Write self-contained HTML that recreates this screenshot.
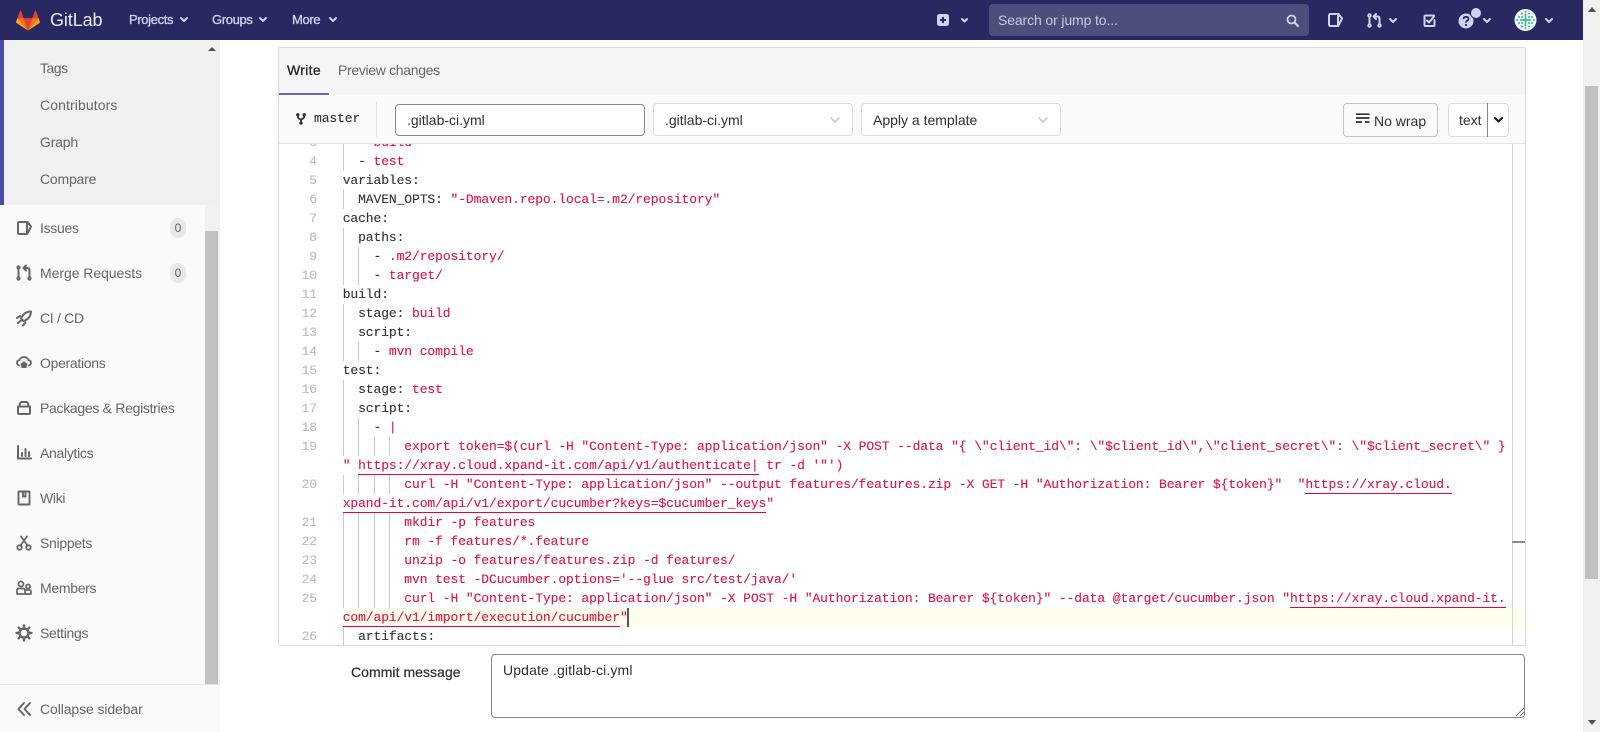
<!DOCTYPE html>
<html>
<head>
<meta charset="utf-8">
<style>
html,body{margin:0;padding:0;width:1600px;height:732px;overflow:hidden;background:#fff;font-family:"Liberation Sans",sans-serif;font-size:14px;color:#303030}
*{box-sizing:border-box}
.a{position:absolute}
svg{display:block;overflow:visible}
#nav{left:0;top:0;width:1583px;height:40px;background:#292961}
.nt{position:absolute;top:0;line-height:40px;color:#d1d1f0;font-size:13px;letter-spacing:-.35px;-webkit-text-stroke:.3px #d1d1f0;white-space:nowrap}
.chev{position:absolute;fill:none;stroke:#d1d1f0;stroke-width:2;stroke-linecap:round;stroke-linejoin:round}
.ni{position:absolute;fill:none;stroke:#d1d1f0;stroke-width:1.8;stroke-linejoin:round;stroke-linecap:round}
.s{position:absolute;left:40px;line-height:20px;height:20px;font-size:14px;color:#666;white-space:nowrap;letter-spacing:-.2px}
.m{position:absolute;left:40px;line-height:20px;height:20px;font-size:14px;color:#666;white-space:nowrap;letter-spacing:-.3px}
.si{position:absolute;left:16px;fill:none;stroke:#666;stroke-width:1.8;stroke-linejoin:round;stroke-linecap:round}
.bd{position:absolute;left:170px;width:16px;height:20px;border-radius:8px;background:#e8e8e8;color:#666;font-size:12px;line-height:20px;text-align:center}
.box{position:absolute;border:1px solid #dcdcdc;border-radius:4px;background:#fff;height:33px;line-height:32px;padding-left:11px;font-size:14px;color:#303030;white-space:nowrap;letter-spacing:0}
#ed{left:279px;top:144px;width:1246px;height:501px;overflow:hidden;background:#fff}
#rows{position:absolute;left:0;top:-11px;width:1246px}
.r{position:relative;height:19px;width:1246px;font-family:"Liberation Mono",monospace;font-size:13px;letter-spacing:-.1px;line-height:19px;white-space:pre;color:#333;-webkit-text-stroke:.12px}
.t{position:absolute;left:63.7px;top:0;height:19px}
.n{position:absolute;left:0;width:38px;top:0;text-align:right;color:#bdbdbd}
.g{position:absolute;top:0;width:1px;height:19px;background:#c8c8c8}
.g0{left:64px}.g2{left:79.4px}.g4{left:94.8px}.g6{left:110.2px}
b{font-weight:normal;color:#e0124a}
u{text-decoration:none;display:inline-block;height:19px;line-height:19px;box-sizing:border-box;border-bottom:1px solid #e8003f;vertical-align:top;color:#e0124a}
</style>
</head>
<body>
<!-- top nav -->
<div id="nav" class="a">
<svg class="a" style="left:16px;top:9px" width="24" height="22" viewBox="0 0 36 36" preserveAspectRatio="none"><path fill="#e24329" d="m17.996 35.308 6.624-20.387H11.372z"/><path fill="#fc6d26" d="m17.996 35.308-6.624-20.387H2.09z"/><path fill="#fca326" d="m2.09 14.921-2.013 6.195a1.37 1.37 0 0 0 .498 1.532l17.42 12.66z"/><path fill="#e24329" d="M2.09 14.921h9.282L7.383 2.644a.686.686 0 0 0-1.305 0z"/><path fill="#fc6d26" d="m17.996 35.308 6.624-20.387h9.282z"/><path fill="#fca326" d="m33.902 14.921 2.013 6.195a1.37 1.37 0 0 1-.498 1.532l-17.42 12.66z"/><path fill="#e24329" d="M33.902 14.921H24.62l3.989-12.277a.686.686 0 0 1 1.305 0z"/></svg>
<div class="nt" style="left:50px;font-size:18px;color:#e8e8f6;letter-spacing:-.1px;-webkit-text-stroke:0">GitLab</div>
<div class="nt" style="left:129px">Projects</div>
<svg class="chev" style="left:180px;top:17px" width="8" height="6"><path d="M1 1l3 3 3-3"/></svg>
<div class="nt" style="left:212px">Groups</div>
<svg class="chev" style="left:259px;top:17px" width="8" height="6"><path d="M1 1l3 3 3-3"/></svg>
<div class="nt" style="left:292px">More</div>
<svg class="chev" style="left:329px;top:17px" width="8" height="6"><path d="M1 1l3 3 3-3"/></svg>

<svg class="a" style="left:937px;top:14px" width="12" height="12" viewBox="0 0 12 12"><rect width="12" height="12" rx="2.5" fill="#d1d1f0"/><path d="M6 3v6M3 6h6" stroke="#292961" stroke-width="2"/></svg>
<svg class="chev" style="left:961px;top:18px" width="7" height="5"><path d="M1 1l2.5 2.5L6 1"/></svg>
<div class="a" style="left:989px;top:4px;width:320px;height:32px;background:#4e4e7d;border-radius:4px"></div>
<div class="a" style="left:998px;top:4px;line-height:33px;color:#c8c8e0;font-size:14px;letter-spacing:-.12px">Search or jump to...</div>
<svg class="ni" style="left:1286px;top:14px" width="13" height="13" viewBox="0 0 13 13"><circle cx="5.5" cy="5.5" r="4"/><path d="M8.5 8.5l3.5 3.5" stroke-width="2.2"/></svg>
<svg class="ni" style="left:1328px;top:13px" width="15" height="14" viewBox="0 0 15 14"><path d="M10 1H2.500A1.500 1.500 0 0 0 1 2.500v9A1.500 1.500 0 0 0 2.500 13H10M10 1h.5l3.500 4.500-3.500 7L10 13M10 1v12" stroke-width="2"/></svg>
<svg class="ni" style="left:1367px;top:13px" width="15" height="15" viewBox="0 0 15 15"><circle cx="2.500" cy="2.500" r="1.300"/><circle cx="2.500" cy="12.500" r="1.300"/><circle cx="12.500" cy="12.500" r="1.300"/><path d="M2.500 4v7M12.500 11V5.500Q12.500 3.500 10.500 3.500H7M9 1L6.500 3.500 9 6" stroke-width="2"/></svg>
<svg class="chev" style="left:1389px;top:18px" width="8" height="5"><path d="M1 1l3 3 3-3"/></svg>
<svg class="ni" style="left:1423px;top:14px" width="13" height="13" viewBox="0 0 13 13"><path d="M11.500 6v5a1 1 0 0 1-1 1h-8a1 1 0 0 1-1-1V2.500a1 1 0 0 1 1-1h8.500M4 6.500l2 2 5-6" stroke-width="2"/></svg>
<svg class="a" style="left:1458px;top:13px" width="16" height="16" viewBox="0 0 16 16"><circle cx="8" cy="8" r="7.500" fill="#d1d1f0"/><path d="M5.500 6.200Q5.700 3.800 8 3.800t2.500 2.100Q10.500 7.300 8.800 8 8 8.400 8 9.600" fill="none" stroke="#292961" stroke-width="1.800"/><circle cx="8" cy="12" r="1.100" fill="#292961"/></svg>
<div class="a" style="left:1471px;top:8px;width:10px;height:10px;border-radius:5px;background:#d1d1f0;box-shadow:0 0 0 1px #292961"></div>
<svg class="chev" style="left:1483px;top:18px" width="8" height="5"><path d="M1 1l3 3 3-3"/></svg>
<svg class="a" style="left:1514px;top:9px" width="23" height="22" viewBox="0 0 23 22"><circle cx="11.500" cy="11" r="11" fill="#f0f5f3"/><g fill="#35b596"><rect x="6" y="10.200" width="11" height="1.600"/><rect x="10.700" y="5" width="1.600" height="12"/><circle cx="8" cy="8" r="1"/><circle cx="15" cy="8" r="1"/><circle cx="8" cy="14" r="1"/><circle cx="15" cy="14" r="1"/><circle cx="5" cy="8" r="1"/><circle cx="18" cy="8" r="1"/><circle cx="5" cy="14" r="1"/><circle cx="18" cy="14" r="1"/><circle cx="8" cy="4.500" r="1"/><circle cx="15" cy="4.500" r="1"/><circle cx="8" cy="17.500" r="1"/><circle cx="15" cy="17.500" r="1"/><circle cx="11.500" cy="2.800" r="1"/><circle cx="11.500" cy="19.200" r="1"/><circle cx="3" cy="11" r="1"/><circle cx="20" cy="11" r="1"/></g></svg>
<svg class="chev" style="left:1545px;top:18px" width="8" height="5"><path d="M1 1l3 3 3-3"/></svg>
</div>

<!-- page scrollbar -->
<div class="a" style="left:1583px;top:0;width:17px;height:732px;background:#f1f1f1"></div>
<div class="a" style="left:1585px;top:86px;width:13px;height:493px;background:#c1c1c1"></div>
<div class="a" style="left:1588px;top:7px;border:4px solid transparent;border-top:0;border-bottom:5px solid #505050"></div>
<div class="a" style="left:1588px;top:720px;border:4px solid transparent;border-bottom:0;border-top:5px solid #505050"></div>

<!-- sidebar -->
<div class="a" style="left:0;top:40px;width:220px;height:692px;background:#fafafa"></div>
<div class="a" style="left:0;top:40px;width:220px;height:165px;background:#f0f0f0"></div>
<div class="a" style="left:0;top:40px;width:4px;height:165px;background:#4b4ba3"></div>
<div class="a" style="left:205px;top:205px;width:15px;height:479px;background:#f1f1f1"></div>
<div class="a" style="left:205px;top:231px;width:13px;height:453px;background:#c1c1c1"></div>
<div class="a" style="left:208px;top:47px;border:4px solid transparent;border-top:0;border-bottom:4px solid #505050"></div>
<div class="s" style="top:58px;letter-spacing:-.5px">Tags</div>
<div class="s" style="top:95px;letter-spacing:.1px">Contributors</div>
<div class="s" style="top:132px">Graph</div>
<div class="s" style="top:169px">Compare</div>

<svg class="si" style="top:220px" width="16" height="16" viewBox="0 0 16 16"><path d="M11 2H3a1 1 0 0 0-1 1v10a1 1 0 0 0 1 1h8M11 2h.5L15 6.500l-3.500 7L11 14M11 2v12" stroke-width="2"/></svg>
<div class="m" style="top:218px">Issues</div><div class="bd" style="top:218px">0</div>
<svg class="si" style="top:265px" width="16" height="16" viewBox="0 0 16 16"><circle cx="2.500" cy="2.500" r="1.200"/><circle cx="2.500" cy="13.500" r="1.200"/><circle cx="13.500" cy="13.500" r="1.200"/><path d="M2.500 4v8M13.500 12V5q0-2-2-2H8M10 .5L7.500 3 10 5.500" stroke-width="2"/></svg>
<div class="m" style="top:263px;letter-spacing:-.05px">Merge Requests</div><div class="bd" style="top:263px">0</div>
<svg class="si" style="top:310px" width="16" height="16" viewBox="0 0 16 16"><path d="M15 1.500Q8 1.500 5 8.500l2.500 2.500Q14.500 9 15 1.500zM1 8l3-2M7 15.500l2.500-3M2 13l3-2.500" stroke-width="2"/></svg>
<div class="m" style="top:308px">CI / CD</div>
<svg class="si" style="top:355px" width="16" height="16" viewBox="0 0 16 16"><path d="M3 10.500Q.8 9.500 1 7.500 1.200 5.500 3.500 5 5 2 8 2t4.500 3Q14.800 5.500 15 7.500q.2 2-2 3" stroke-width="1.800"/><path d="M8 7l3 2-1 3.500H6L5 9z" fill="#666" stroke-width="1"/></svg>
<div class="m" style="top:353px">Operations</div>
<svg class="si" style="top:400px" width="16" height="16" viewBox="0 0 16 16"><path d="M2 6.500h12V13a1 1 0 0 1-1 1H3a1 1 0 0 1-1-1zM3.500 6.500Q3.500 2 6 2h4q2.500 0 2.500 4.500" stroke-width="2"/></svg>
<div class="m" style="top:398px">Packages &amp; Registries</div>
<svg class="si" style="top:445px" width="16" height="16" viewBox="0 0 16 16"><path d="M2 1v12.500h13M6 11V8M9.500 11V4M13 11V7" stroke-width="2"/></svg>
<div class="m" style="top:443px">Analytics</div>
<svg class="si" style="top:490px" width="16" height="16" viewBox="0 0 16 16"><path d="M3 1.500h10a.5.5 0 0 1 .5.5v12a.5.5 0 0 1-.5.5H3a.5.5 0 0 1-.5-.5V2a.5.5 0 0 1 .5-.5zM7 1.500V6.500h2.500V1.500" stroke-width="1.900"/></svg>
<div class="m" style="top:488px">Wiki</div>
<svg class="si" style="top:535px" width="16" height="16" viewBox="0 0 16 16"><circle cx="3.500" cy="12.500" r="2.200"/><circle cx="12.500" cy="12.500" r="2.200"/><path d="M4.500 10.500L11 1.500M11.500 10.500L5 1.500" stroke-width="1.700"/></svg>
<div class="m" style="top:533px">Snippets</div>
<svg class="si" style="top:580px" width="16" height="16" viewBox="0 0 16 16"><circle cx="5" cy="4" r="2.500"/><circle cx="12" cy="6.500" r="2"/><path d="M1 14V10.500Q1 8.500 3 8.500h4Q9 8.500 9 10.500V14zM9.500 14h5.500v-2.500q0-1.500-1.500-1.500h-4" stroke-width="1.700"/></svg>
<div class="m" style="top:578px">Members</div>
<svg class="si" style="top:625px" width="16" height="16" viewBox="0 0 16 16"><circle cx="8" cy="8" r="4.500" stroke-width="2.400"/><path d="M8 .5v2.500M8 13v2.500M.5 8H3M13 8h2.500M2.700 2.700l1.800 1.800M11.500 11.500l1.800 1.800M2.700 13.300l1.800-1.800M11.500 4.500l1.800-1.800" stroke-width="2.400"/></svg>
<div class="m" style="top:623px">Settings</div>
<div class="a" style="left:0;top:684px;width:220px;height:48px;background:#fafafa;border-top:1px solid #e5e5e5"></div>
<svg class="si" style="top:701px" width="16" height="16" viewBox="0 0 16 16"><path d="M8 2L2.500 8 8 14M14 2L8.500 8l5.500 6" stroke-width="2"/></svg>
<div class="m" style="top:699px;letter-spacing:-.1px">Collapse sidebar</div>

<!-- editor panel -->
<div class="a" style="left:278px;top:47px;width:1248px;height:599px;border:1px solid #dcdcdc;border-radius:2px"></div>
<div class="a" style="left:279px;top:48px;width:1246px;height:47px;background:#f5f5f5"></div>
<div class="a" style="left:279px;top:93px;width:50px;height:2px;background:#6666c4"></div>
<div class="a" style="left:287px;top:60px;line-height:20px;font-size:14px;color:#202020;letter-spacing:.3px;-webkit-text-stroke:.25px #202020">Write</div>
<div class="a" style="left:338px;top:60px;line-height:20px;font-size:14px;color:#666;letter-spacing:-.32px">Preview changes</div>
<div class="a" style="left:279px;top:95px;width:1246px;height:49px;background:#fafafa;border-bottom:1px solid #e5e5e5;box-shadow:0 1px 2px rgba(0,0,0,.05)"></div>
<svg class="a" style="left:296px;top:113px" width="10" height="12" viewBox="0 0 10 12"><circle cx="1.800" cy="1.800" r="1.700" fill="#303030"/><circle cx="8.200" cy="1.800" r="1.700" fill="#303030"/><circle cx="5" cy="10" r="1.700" fill="#303030"/><path d="M1.800 2v1.500Q1.800 5.500 5 6.500 8.200 5.500 8.200 3.500V2M5 6v4" fill="none" stroke="#303030" stroke-width="1.800"/></svg>
<div class="a" style="left:314px;top:109px;line-height:20px;font-family:'Liberation Mono',monospace;font-size:13px;letter-spacing:-.1px;color:#303030;-webkit-text-stroke:.12px">master</div>
<div class="a" style="left:376px;top:102px;width:1px;height:35px;background:#e5e5e5"></div>
<div class="box" style="left:395px;top:104px;width:250px;height:32px;border-color:#868686;line-height:31px">.gitlab-ci.yml</div>
<div class="box" style="left:653px;top:103px;width:200px">.gitlab-ci.yml</div>
<svg class="chev" style="left:830px;top:117px;stroke:#c4c4c4;stroke-width:1.400" width="10" height="6"><path d="M1 1l4 4 4-4"/></svg>
<div class="box" style="left:861px;top:103px;width:200px">Apply a template</div>
<svg class="chev" style="left:1038px;top:117px;stroke:#c4c4c4;stroke-width:1.400" width="10" height="6"><path d="M1 1l4 4 4-4"/></svg>
<div class="box" style="left:1343px;top:103px;width:95px;height:34px;border-color:#c4c4c4;background:#fafafa;padding-left:30px;line-height:34px">No wrap</div>
<svg class="a" style="left:1356px;top:113px" width="14" height="11" viewBox="0 0 14 11"><path d="M0 1.200h13.500M0 5h13.500M0 9h6M9 9h4.500" stroke="#303030" stroke-width="1.700"/></svg>
<div class="box" style="left:1448px;top:103px;width:61px;height:34px;line-height:32px;padding-left:10px">text</div>
<div class="a" style="left:1487px;top:103px;width:1px;height:34px;background:#868686"></div>
<svg class="chev" style="left:1494px;top:117px;stroke:#202020;stroke-width:2.200" width="9" height="6"><path d="M1 1l3.500 3.500L8 1"/></svg>

<div id="ed" class="a">
<div class="a" style="left:64px;top:464px;width:1182px;height:19px;background:#fffdeb"></div>
<div class="a" style="left:1233px;top:0;width:1px;height:501px;background:#d4d4d4"></div>
<div class="a" style="left:1233px;top:397px;width:13px;height:2px;background:#8a8a8a"></div>
<div id="rows">
<div class="r"><span class="n">3</span><i class="g g0"></i><span class="t">  - <b>build</b></span></div>
<div class="r"><span class="n">4</span><i class="g g0"></i><span class="t">  - <b>test</b></span></div>
<div class="r"><span class="n">5</span><span class="t">variables:</span></div>
<div class="r"><span class="n">6</span><i class="g g0"></i><span class="t">  MAVEN_OPTS: <b>"-Dmaven.repo.local=.m2/repository"</b></span></div>
<div class="r"><span class="n">7</span><span class="t">cache:</span></div>
<div class="r"><span class="n">8</span><i class="g g0"></i><span class="t">  paths:</span></div>
<div class="r"><span class="n">9</span><i class="g g0"></i><i class="g g2"></i><span class="t">    - <b>.m2/repository/</b></span></div>
<div class="r"><span class="n">10</span><i class="g g0"></i><i class="g g2"></i><span class="t">    - <b>target/</b></span></div>
<div class="r"><span class="n">11</span><span class="t">build:</span></div>
<div class="r"><span class="n">12</span><i class="g g0"></i><span class="t">  stage: <b>build</b></span></div>
<div class="r"><span class="n">13</span><i class="g g0"></i><span class="t">  script:</span></div>
<div class="r"><span class="n">14</span><i class="g g0"></i><i class="g g2"></i><span class="t">    - <b>mvn compile</b></span></div>
<div class="r"><span class="n">15</span><span class="t">test:</span></div>
<div class="r"><span class="n">16</span><i class="g g0"></i><span class="t">  stage: <b>test</b></span></div>
<div class="r"><span class="n">17</span><i class="g g0"></i><span class="t">  script:</span></div>
<div class="r"><span class="n">18</span><i class="g g0"></i><i class="g g2"></i><span class="t">    - <b>|</b></span></div>
<div class="r"><span class="n">19</span><i class="g g0"></i><i class="g g2"></i><i class="g g4"></i><i class="g g6"></i><span class="t"><b>        export token=$(curl -H "Content-Type: application/json" -X POST --data "{ \"client_id\": \"$client_id\",\"client_secret\": \"$client_secret\" }</b></span></div>
<div class="r"><span class="t"><b>" </b><u>https://xray.cloud.xpand-it.com/api/v1/authenticate|</u><b> tr -d '"')</b></span></div>
<div class="r"><span class="n">20</span><i class="g g0"></i><i class="g g2"></i><i class="g g4"></i><i class="g g6"></i><span class="t"><b>        curl -H "Content-Type: application/json" --output features/features.zip -X GET -H "Authorization: Bearer ${token}"  "</b><u>https://xray.cloud.</u></span></div>
<div class="r"><span class="t"><u>xpand-it.com/api/v1/export/cucumber?keys=$cucumber_keys</u><b>"</b></span></div>
<div class="r"><span class="n">21</span><i class="g g0"></i><i class="g g2"></i><i class="g g4"></i><i class="g g6"></i><span class="t"><b>        mkdir -p features</b></span></div>
<div class="r"><span class="n">22</span><i class="g g0"></i><i class="g g2"></i><i class="g g4"></i><i class="g g6"></i><span class="t"><b>        rm -f features/*.feature</b></span></div>
<div class="r"><span class="n">23</span><i class="g g0"></i><i class="g g2"></i><i class="g g4"></i><i class="g g6"></i><span class="t"><b>        unzip -o features/features.zip -d features/</b></span></div>
<div class="r"><span class="n">24</span><i class="g g0"></i><i class="g g2"></i><i class="g g4"></i><i class="g g6"></i><span class="t"><b>        mvn test -DCucumber.options='--glue src/test/java/'</b></span></div>
<div class="r"><span class="n">25</span><i class="g g0"></i><i class="g g2"></i><i class="g g4"></i><i class="g g6"></i><span class="t"><b>        curl -H "Content-Type: application/json" -X POST -H "Authorization: Bearer ${token}" --data @target/cucumber.json "</b><u>https://xray.cloud.xpand-it.</u></span></div>
<div class="r"><span class="t"><u>com/api/v1/import/execution/cucumber</u><b>"</b></span><i class="a" style="left:348px;top:0;width:2px;height:19px;background:#555"></i></div>
<div class="r"><span class="n">26</span><i class="g g0"></i><span class="t">  artifacts:</span></div>
</div>
</div>

<!-- commit message -->
<div class="a" style="left:351px;top:662px;line-height:20px;font-size:14px;color:#303030;letter-spacing:.05px;-webkit-text-stroke:.25px #303030">Commit message</div>
<div class="a" style="left:491px;top:654px;width:1034px;height:64px;border:1px solid #868686;border-radius:4px;background:#fff"></div>
<div class="a" style="left:503px;top:660px;line-height:20px;font-size:14px;color:#303030;letter-spacing:.13px">Update .gitlab-ci.yml</div>
<svg class="a" style="left:1516px;top:708px" width="8" height="8" viewBox="0 0 8 8"><path d="M0 8L8 0M4 8L8 4" stroke="#777" stroke-width="1"/></svg>
</body>
</html>
